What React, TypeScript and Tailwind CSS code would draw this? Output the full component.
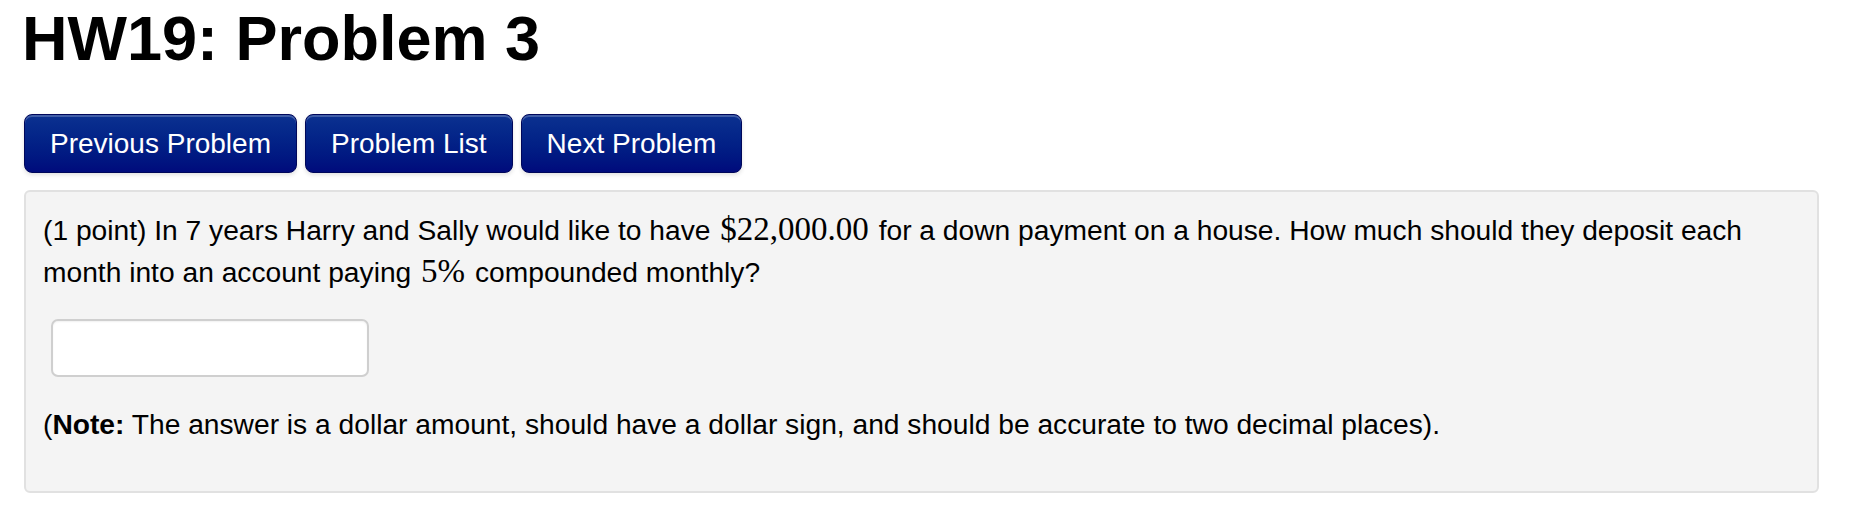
import React from "react";

const sans = { fontFamily: '"Liberation Sans", Arial, Helvetica, sans-serif' };
const serif = { fontFamily: '"Liberation Serif", "Times New Roman", serif' };

function NavButton({ label }: { label: string }) {
  return (
    <button
      className="h-[59px] px-[25px] rounded-[8px] border border-[#00075a] bg-gradient-to-b from-[#0c3190] to-[#000a7c] text-white text-[28px] leading-none shadow-[inset_0_2px_0_rgba(255,255,255,0.22),0_2px_4px_rgba(0,0,0,0.12)]"
      style={sans}
    >
      {label}
    </button>
  );
}

export default function App() {
  return (
    <div className="w-[1858px] h-[520px] bg-white text-black" style={sans}>
      <div className="pl-[22px] pt-[7px]">
        <h1 className="text-[63px] leading-[63px] font-bold text-black">HW19: Problem 3</h1>
      </div>
      <div className="flex gap-[8px] pl-[24px] mt-[44px]">
        <NavButton label="Previous Problem" />
        <NavButton label="Problem List" />
        <NavButton label="Next Problem" />
      </div>
      <div className="ml-[24px] mt-[17px] w-[1795px] h-[303px] bg-[#f4f4f4] border-2 border-[#e1e1e1] rounded-[6px] px-[17px] pt-[17px]">
        <p className="text-[28.2px] leading-[41px] text-black">
          (1 point) In 7 years Harry and Sally would like to have{" "}
          <span className="text-[33px] mx-[2px]" style={serif}>
            $22,000.00
          </span>{" "}
          for a down payment on a house. How much should they deposit each month into an account paying{" "}
          <span className="text-[33px] mx-[2px]" style={serif}>
            5%
          </span>{" "}
          compounded monthly?
        </p>
        <div className="mt-[26px] ml-[8px]">
          <input
            type="text"
            className="block w-[318px] h-[58px] bg-white border-2 border-[#cfcfcf] rounded-[7px] shadow-[inset_0_1px_2px_rgba(0,0,0,0.06)]"
          />
        </div>
        <p className="mt-[27px] text-[28.2px] leading-[41px] text-black">
          (<b>Note:</b> The answer is a dollar amount, should have a dollar sign, and should be accurate to two decimal places).
        </p>
      </div>
    </div>
  );
}
